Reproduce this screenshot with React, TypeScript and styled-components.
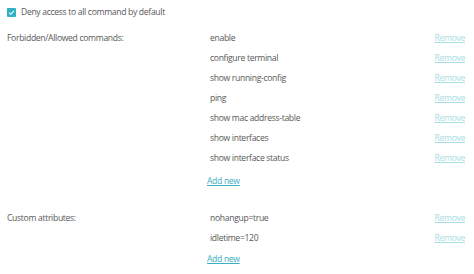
import React from 'react'
import styled, { createGlobalStyle } from 'styled-components'

const GlobalStyle = createGlobalStyle`
    html, body {
        margin: 0;
        padding: 0;
        background: #ffffff;
    }
    body {
        font-family: "Open Sans", "Noto Sans", sans-serif;
        font-size: 8.6px;
        letter-spacing: -0.32px;
        color: #585858;
    }
`

const Page = styled.div`
    width: 474px;
    height: 274px;
    box-sizing: border-box;
    padding: 5px 9px 0 7px;
    overflow: hidden;
`

const CheckRow = styled.label`
    display: flex;
    align-items: center;
    gap: 5px;
    height: 14px;
`

const CheckBox = styled.span`
    width: 9px;
    height: 9px;
    border-radius: 1px;
    background: #2fb3c2;
    display: flex;
    align-items: center;
    justify-content: center;
`

const Section = styled.div<{ top: number }>`
    display: grid;
    grid-template-columns: 200px 1fr;
    margin-top: ${(p) => p.top}px;
`

const SectionLabel = styled.div`
    height: 20px;
    line-height: 20px;
`

const Items = styled.div`
    display: flex;
    flex-direction: column;
`

const ItemRow = styled.div`
    display: flex;
    justify-content: space-between;
    align-items: center;
    height: 20px;
    padding-left: 3px;
`

const Link = styled.a<{ faded?: boolean }>`
    color: ${(p) => (p.faded ? '#a9dce3' : '#3aaec2')};
    text-decoration: underline;
    cursor: pointer;
`

const AddRow = styled.div<{ gap: number }>`
    height: 20px;
    line-height: 20px;
    margin-top: ${(p) => p.gap}px;
`

const commands = [
    'enable',
    'configure terminal',
    'show running-config',
    'ping',
    'show mac address-table',
    'show interfaces',
    'show interface status',
]

const attributes = ['nohangup=true', 'idletime=120']

type ListProps = {
    label: string
    items: string[]
    top: number
    addGap: number
}

const ItemList: React.FC<ListProps> = (props) => {
    return (
        <Section top={props.top}>
            <SectionLabel>{props.label}</SectionLabel>
            <Items>
                {props.items.map((item) => (
                    <ItemRow key={item}>
                        <span>{item}</span>
                        <Link faded>Remove</Link>
                    </ItemRow>
                ))}
                <AddRow gap={props.addGap}>
                    <Link>Add new</Link>
                </AddRow>
            </Items>
        </Section>
    )
}

const App: React.FC = () => {
    return (
        <>
            <GlobalStyle />
            <Page>
                <CheckRow>
                    <CheckBox>
                        <svg width="7" height="7" viewBox="0 0 10 10">
                            <path d="M1.5 5.2 L4 7.6 L8.6 2.6" fill="none" stroke="#ffffff" strokeWidth="1.6" />
                        </svg>
                    </CheckBox>
                    Deny access to all command by default
                </CheckRow>
                <ItemList label="Forbidden/Allowed commands:" items={commands} top={9} addGap={3} />
                <ItemList label="Custom attributes:" items={attributes} top={17} addGap={1} />
            </Page>
        </>
    )
}

export default App
